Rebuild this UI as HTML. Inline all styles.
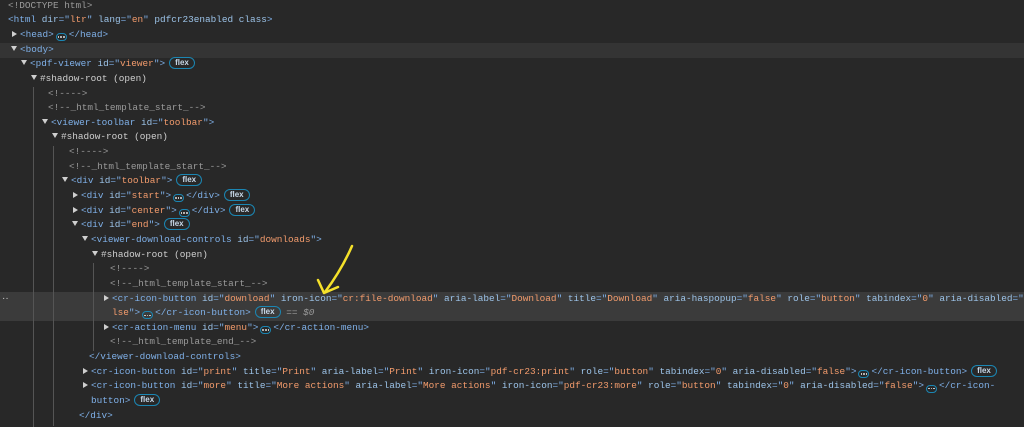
<!DOCTYPE html>
<html><head><style>
html,body{margin:0;padding:0;background:#282828;width:1024px;height:421px;overflow:hidden}
#c{position:absolute;top:-1.3px;left:0;width:1024px;font-family:"Liberation Mono",monospace;font-size:9.4px;color:#cfcfcf}
.l{height:14.65px;line-height:14.65px;white-space:pre;position:relative}
.t{color:#7fb0e8}.a{color:#9cc3e8}.v{color:#f29b6c}.cm{color:#9a9a9a}.g{color:#d0d0d0}
.tri{display:inline-block;width:0;height:0;border-left:3px solid transparent;border-right:3px solid transparent;border-top:5px solid #cfcfcf;margin-right:3px;vertical-align:1px}
.tr{display:inline-block;width:0;height:0;border-top:3px solid transparent;border-bottom:3px solid transparent;border-left:5px solid #cfcfcf;margin-right:3px;vertical-align:0px}
.pill{display:inline-block;border:1px solid #1b86b3;border-radius:7px;color:#c8d8e8;font-size:8px;line-height:10px;padding:0 5px;margin-left:4px;vertical-align:1px;font-family:"Liberation Sans",sans-serif;font-weight:bold}
.dots{display:inline-flex;align-items:center;justify-content:center;gap:1px;border:1px solid #1b86b3;border-radius:5px;width:11px;height:8px;vertical-align:-1px;margin:0 2px;box-sizing:border-box}
.dots i{display:block;width:1.6px;height:1.6px;background:#ddd;border-radius:1px}
.sel{position:absolute;left:0;width:1024px;background:#3b3b3b}
.vl{position:absolute;width:1px;background:#555}
</style></head><body>
<div class="sel" style="top:43px;height:14.6px;background:#343434"></div>
<div class="sel" style="top:292px;height:29px"></div>
<div class="vl" style="left:33px;top:87px;height:340px"></div>
<div class="vl" style="left:53px;top:146px;height:280px"></div>
<div class="vl" style="left:93px;top:263px;height:88px"></div>
<div style="position:absolute;left:2px;top:293px;color:#ccc;font-size:10px;font-family:'Liberation Sans',sans-serif">··</div>
<div id="c">
<div class="l" style="padding-left:8px"><span class="cm">&lt;!DOCTYPE html&gt;</span></div>
<div class="l" style="padding-left:8px"><span class="t">&lt;html </span><span class="a">dir</span><span class="t">="</span><span class="v">ltr</span><span class="t">" </span><span class="a">lang</span><span class="t">="</span><span class="v">en</span><span class="t">" </span><span class="a">pdfcr23enabled class</span><span class="t">&gt;</span></div>
<div class="l" style="padding-left:12px"><span class="tr"></span><span class="t">&lt;head&gt;</span><span class="dots"><i></i><i></i><i></i></span><span class="t">&lt;/head&gt;</span></div>
<div class="l" style="padding-left:11px"><span class="tri"></span><span class="t">&lt;body&gt;</span></div>
<div class="l" style="padding-left:21px"><span class="tri"></span><span class="t">&lt;pdf-viewer </span><span class="a">id</span><span class="t">="</span><span class="v">viewer</span><span class="t">"&gt;</span><span class="pill">flex</span></div>
<div class="l" style="padding-left:31px"><span class="tri"></span><span class="g">#shadow-root (open)</span></div>
<div class="l" style="padding-left:48px"><span class="cm">&lt;!----&gt;</span></div>
<div class="l" style="padding-left:48px"><span class="cm">&lt;!--_html_template_start_--&gt;</span></div>
<div class="l" style="padding-left:42px"><span class="tri"></span><span class="t">&lt;viewer-toolbar </span><span class="a">id</span><span class="t">="</span><span class="v">toolbar</span><span class="t">"&gt;</span></div>
<div class="l" style="padding-left:52px"><span class="tri"></span><span class="g">#shadow-root (open)</span></div>
<div class="l" style="padding-left:69px"><span class="cm">&lt;!----&gt;</span></div>
<div class="l" style="padding-left:69px"><span class="cm">&lt;!--_html_template_start_--&gt;</span></div>
<div class="l" style="padding-left:62px"><span class="tri"></span><span class="t">&lt;div </span><span class="a">id</span><span class="t">="</span><span class="v">toolbar</span><span class="t">"&gt;</span><span class="pill">flex</span></div>
<div class="l" style="padding-left:73px"><span class="tr"></span><span class="t">&lt;div </span><span class="a">id</span><span class="t">="</span><span class="v">start</span><span class="t">"&gt;</span><span class="dots"><i></i><i></i><i></i></span><span class="t">&lt;/div&gt;</span><span class="pill">flex</span></div>
<div class="l" style="padding-left:73px"><span class="tr"></span><span class="t">&lt;div </span><span class="a">id</span><span class="t">="</span><span class="v">center</span><span class="t">"&gt;</span><span class="dots"><i></i><i></i><i></i></span><span class="t">&lt;/div&gt;</span><span class="pill">flex</span></div>
<div class="l" style="padding-left:72px"><span class="tri"></span><span class="t">&lt;div </span><span class="a">id</span><span class="t">="</span><span class="v">end</span><span class="t">"&gt;</span><span class="pill">flex</span></div>
<div class="l" style="padding-left:82px"><span class="tri"></span><span class="t">&lt;viewer-download-controls </span><span class="a">id</span><span class="t">="</span><span class="v">downloads</span><span class="t">"&gt;</span></div>
<div class="l" style="padding-left:92px"><span class="tri"></span><span class="g">#shadow-root (open)</span></div>
<div class="l" style="padding-left:110px"><span class="cm">&lt;!----&gt;</span></div>
<div class="l" style="padding-left:110px"><span class="cm">&lt;!--_html_template_start_--&gt;</span></div>
<div class="l" style="padding-left:104px"><span class="tr"></span><span class="t">&lt;cr-icon-button </span><span class="a">id</span><span class="t">="</span><span class="v">download</span><span class="t">" </span><span class="a">iron-icon</span><span class="t">="</span><span class="v">cr:file-download</span><span class="t">" </span><span class="a">aria-label</span><span class="t">="</span><span class="v">Download</span><span class="t">" </span><span class="a">title</span><span class="t">="</span><span class="v">Download</span><span class="t">" </span><span class="a">aria-haspopup</span><span class="t">="</span><span class="v">false</span><span class="t">" </span><span class="a">role</span><span class="t">="</span><span class="v">button</span><span class="t">" </span><span class="a">tabindex</span><span class="t">="</span><span class="v">0</span><span class="t">" </span><span class="a">aria-disabled</span><span class="t">="</span><span class="v">false</span></div>
<div class="l" style="padding-left:112px"><span class="v">lse</span><span class="t">"&gt;</span><span class="dots"><i></i><i></i><i></i></span><span class="t">&lt;/cr-icon-button&gt;</span><span class="pill">flex</span><span class="cm"> == <i>$0</i></span></div>
<div class="l" style="padding-left:104px"><span class="tr"></span><span class="t">&lt;cr-action-menu </span><span class="a">id</span><span class="t">="</span><span class="v">menu</span><span class="t">"&gt;</span><span class="dots"><i></i><i></i><i></i></span><span class="t">&lt;/cr-action-menu&gt;</span></div>
<div class="l" style="padding-left:110px"><span class="cm">&lt;!--_html_template_end_--&gt;</span></div>
<div class="l" style="padding-left:89px"><span class="t">&lt;/viewer-download-controls&gt;</span></div>
<div class="l" style="padding-left:83px"><span class="tr"></span><span class="t">&lt;cr-icon-button </span><span class="a">id</span><span class="t">="</span><span class="v">print</span><span class="t">" </span><span class="a">title</span><span class="t">="</span><span class="v">Print</span><span class="t">" </span><span class="a">aria-label</span><span class="t">="</span><span class="v">Print</span><span class="t">" </span><span class="a">iron-icon</span><span class="t">="</span><span class="v">pdf-cr23:print</span><span class="t">" </span><span class="a">role</span><span class="t">="</span><span class="v">button</span><span class="t">" </span><span class="a">tabindex</span><span class="t">="</span><span class="v">0</span><span class="t">" </span><span class="a">aria-disabled</span><span class="t">="</span><span class="v">false</span><span class="t">"&gt;</span><span class="dots"><i></i><i></i><i></i></span><span class="t">&lt;/cr-icon-button&gt;</span><span class="pill">flex</span></div>
<div class="l" style="padding-left:83px"><span class="tr"></span><span class="t">&lt;cr-icon-button </span><span class="a">id</span><span class="t">="</span><span class="v">more</span><span class="t">" </span><span class="a">title</span><span class="t">="</span><span class="v">More actions</span><span class="t">" </span><span class="a">aria-label</span><span class="t">="</span><span class="v">More actions</span><span class="t">" </span><span class="a">iron-icon</span><span class="t">="</span><span class="v">pdf-cr23:more</span><span class="t">" </span><span class="a">role</span><span class="t">="</span><span class="v">button</span><span class="t">" </span><span class="a">tabindex</span><span class="t">="</span><span class="v">0</span><span class="t">" </span><span class="a">aria-disabled</span><span class="t">="</span><span class="v">false</span><span class="t">"&gt;</span><span class="dots"><i></i><i></i><i></i></span><span class="t">&lt;/cr-icon-</span></div>
<div class="l" style="padding-left:91px"><span class="t">button&gt;</span><span class="pill">flex</span></div>
<div class="l" style="padding-left:79px"><span class="t">&lt;/div&gt;</span></div>
</div>
<svg style="position:absolute;left:0;top:0" width="1024" height="421"><path d="M352 246 C345 262 337 276 325 292 M318 280 L324 293 L338 287" fill="none" stroke="#f5e12a" stroke-width="2.5" stroke-linecap="round" stroke-linejoin="round"/></svg>
</body></html>
